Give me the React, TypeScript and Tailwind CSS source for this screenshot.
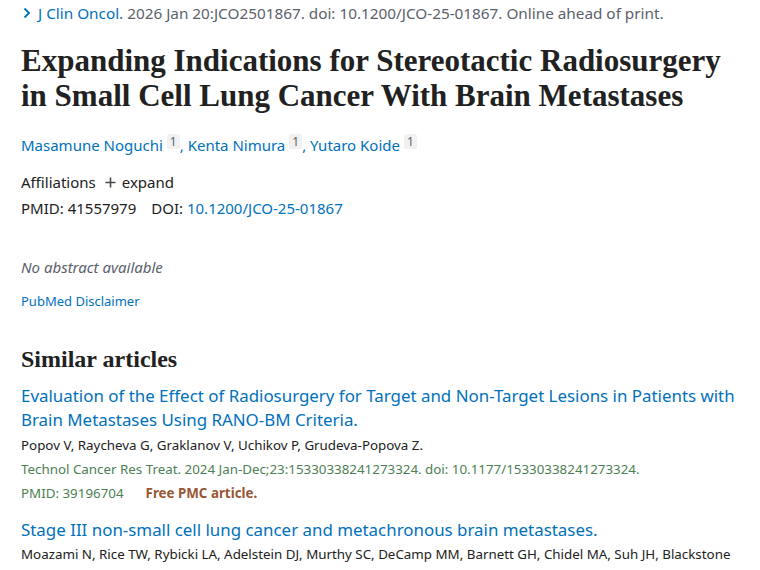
import React from "react";

const SANS = "font-['Noto_Sans',sans-serif]";
const SERIF = "font-['Liberation_Serif',serif]";

const AUTHORS = ["Masamune Noguchi", "Kenta Nimura", "Yutaro Koide"];

function Sup() {
  return (
    <span className="relative top-[-5px] ml-[4px] inline-block rounded-[2px] bg-[#f1f1f1] px-[3px] text-[12px] leading-[15px] text-[#5b616b]">
      1
    </span>
  );
}

export default function App() {
  return (
    <div className={`${SANS} min-h-[570px] overflow-hidden bg-white pl-[21px] pr-[8px] text-[#212121]`}>
      {/* Citation */}
      <div className="flex items-center pt-[2px] text-[15.3px] leading-[22px] text-[#5b616b]">
        <svg width="10" height="12" viewBox="0 0 10 12" className="mr-[6px] ml-[1px]">
          <path d="M2.5 1.5 7 6 2.5 10.5" fill="none" stroke="#0071bc" strokeWidth="1.8" />
        </svg>
        <span className="text-[#0071bc]">J Clin Oncol.</span>
        <span>&nbsp;2026 Jan 20:JCO2501867. doi: 10.1200/JCO-25-01867. Online ahead of print.</span>
      </div>

      {/* Title */}
      <h1 className={`${SERIF} mt-[19px] pr-[20px] text-[31px] font-bold leading-[35px] text-[#212121]`}>
        Expanding Indications for Stereotactic Radiosurgery in Small Cell Lung Cancer With Brain Metastases
      </h1>

      {/* Authors */}
      <div className="mt-[21px] text-[15px] leading-[22px]">
        {AUTHORS.map((a, i) => (
          <span key={a}>
            <span className="text-[#0071bc]">{a}</span>
            <Sup />
            {i < AUTHORS.length - 1 && <span className="text-[#0071bc]">, </span>}
          </span>
        ))}
      </div>

      <div className="mt-[15px] flex items-center text-[15px] leading-[22px]">
        <span>Affiliations</span>
        <span className="ml-[9px] flex items-center text-[#212121]">
          <svg width="11" height="11" viewBox="0 0 11 11" className="mr-[6px]">
            <path d="M5.5 0.5v10M0.5 5.5h10" stroke="#4a4a4a" strokeWidth="1.6" />
          </svg>
          expand
        </span>
      </div>

      <div className="mt-[4px] text-[15px] leading-[22px]">
        <span>PMID: 41557979</span>
        <span className="ml-[15px]">DOI: </span>
        <a className="text-[#0071bc]">10.1200/JCO-25-01867</a>
      </div>

      <p className="mt-[37px] text-[15px] italic leading-[22px] text-[#5b616b]">No abstract available</p>

      <p className="mt-[13px] text-[13px] leading-[20px] text-[#0071bc]">PubMed Disclaimer</p>

      <h2 className={`${SERIF} mt-[33px] text-[24px] font-bold leading-[30px] text-[#212121]`}>Similar articles</h2>

      {/* Similar article 1 */}
      <div className="mt-[10px]">
        <div className="text-[16.9px] leading-[24px] text-[#0071bc]">
          Evaluation of the Effect of Radiosurgery for Target and Non-Target Lesions in Patients with Brain Metastases Using RANO-BM Criteria.
        </div>
        <div className="mt-[1px] text-[13.35px] leading-[24px] text-[#212121]">
          Popov V, Raycheva G, Graklanov V, Uchikov P, Grudeva-Popova Z.
        </div>
        <div className="text-[13.35px] leading-[24px] text-[#4d8055]">
          Technol Cancer Res Treat. 2024 Jan-Dec;23:15330338241273324. doi: 10.1177/15330338241273324.
        </div>
        <div className="text-[13.35px] leading-[24px] text-[#4d8055]">
          PMID: 39196704<span className="ml-[22px] font-bold text-[#985735]">Free PMC article.</span>
        </div>
      </div>

      {/* Similar article 2 */}
      <div className="mt-[13px]">
        <div className="text-[16.9px] leading-[24px] text-[#0071bc]">
          Stage III non-small cell lung cancer and metachronous brain metastases.
        </div>
        <div className="whitespace-nowrap text-[13.35px] leading-[24px] text-[#212121]">
          Moazami N, Rice TW, Rybicki LA, Adelstein DJ, Murthy SC, DeCamp MM, Barnett GH, Chidel MA, Suh JH, Blackstone
        </div>
      </div>
    </div>
  );
}
